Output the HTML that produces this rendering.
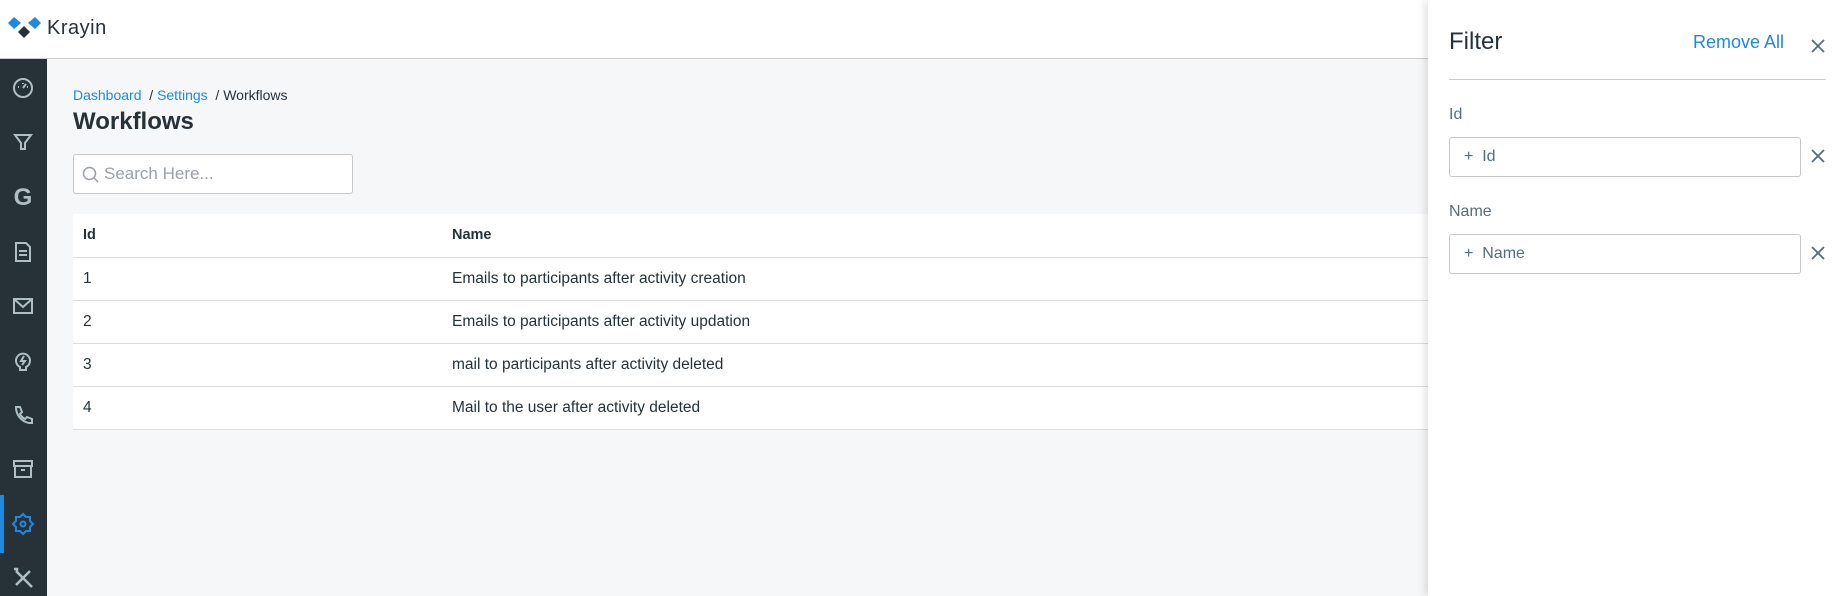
<!DOCTYPE html>
<html><head><meta charset="utf-8"><style>
*{box-sizing:border-box;margin:0;padding:0}
body{width:1842px;height:596px;overflow:hidden;font-family:"Liberation Sans",Arial,sans-serif;background:#f6f7f9;position:relative;color:#263238}
.hdr{position:absolute;left:0;top:0;width:1842px;height:59px;background:#fff;border-bottom:1px solid #ccc}
.side{position:absolute;left:0;top:59px;width:47px;height:537px;background:#263238}
.ic{position:absolute;left:11px;width:24px;height:24px}
.main{position:absolute;left:73px}
.bc{top:87px;font-size:14px;color:#263238}
.bc a{color:#1e88e5;text-decoration:none}
h1{position:absolute;left:73px;top:108px;font-size:24px;font-weight:bold;color:#263238}
.search{position:absolute;left:73px;top:154px;width:280px;height:40px;border:1px solid #c7c7c7;border-radius:3px;background:#fff;font-size:17px;color:#9aa0a6;padding:9px 0 0 30px}
table{position:absolute;left:73px;top:214px;width:1360px;border-collapse:collapse;background:#fff;font-size:15.5px;color:#263238}
td,th{height:43px;text-align:left;padding-left:10px;border-bottom:1px solid #ddd}
th{font-size:14.5px;font-weight:bold}
.panel{position:absolute;left:1428px;top:0;width:414px;height:596px;background:#fff;box-shadow:-3px 0 8px rgba(0,0,0,.12)}
.panel .t{position:absolute;left:21px;top:28px;font-size:24px;color:#263238}
.ra{position:absolute;left:265px;top:32px;font-size:18px;color:#1e88e5}
.x{position:absolute;width:16px;height:16px}
.lbl{position:absolute;left:21px;font-size:16px;color:#546e7a}
.inp{position:absolute;left:21px;width:352px;height:40px;border:1px solid #c7c7c7;border-radius:3px;font-size:16px;color:#546e7a;padding:10px 0 0 14px}
</style></head><body>
<div class="hdr">
<svg style="position:absolute;left:8px;top:17px" width="33" height="22" viewBox="0 0 33 22"><path d="M0 6 L6 0 L13 6 L6 12Z" fill="#1e88e5"/><path d="M20 6 L27 0 L33 6 L27 12Z" fill="#1e88e5"/><path d="M10 15 L16 9 L22 15 L16 21Z" fill="#263238"/></svg>
<div style="position:absolute;left:47px;top:17px;font-size:20px;color:#263238;letter-spacing:.5px">Krayin</div>
</div>
<div class="side">
<svg class="ic" style="top:17px" viewBox="0 0 24 24" fill="none" stroke="#b0bec5" stroke-width="2"><circle cx="12" cy="12" r="9"/><path d="M12 12l3-4M7 11h1M16 11h1M12 7v1"/></svg>
<svg class="ic" style="top:71px" viewBox="0 0 24 24" fill="none" stroke="#b0bec5" stroke-width="2"><path d="M4 5h16l-6 8v6h-4v-6z"/></svg>
<div class="ic" style="top:127px;color:#b0bec5;font-weight:bold;font-size:24px;text-align:center;line-height:24px">G</div>
<svg class="ic" style="top:181px" viewBox="0 0 24 24" fill="none" stroke="#b0bec5" stroke-width="2"><path d="M5 3h10l4 4v14H5z M8 11h8M8 15h8"/></svg>
<svg class="ic" style="top:235px" viewBox="0 0 24 24" fill="none" stroke="#b0bec5" stroke-width="2"><path d="M3 5h18v14H3z M3 5l9 8 9-8"/></svg>
<svg class="ic" style="top:290px" viewBox="0 0 24 24" fill="none" stroke="#b0bec5" stroke-width="2"><path d="M9 18a7 7 0 1 1 6 0v3H9z M13 7l-3 5h4l-3 4"/></svg>
<svg class="ic" style="top:344px" viewBox="0 0 24 24" fill="none" stroke="#b0bec5" stroke-width="2"><path d="M5 4h4l2 5-2 2a11 11 0 0 0 5 5l2-2 5 2v4h-3A16 16 0 0 1 5 4z"/></svg>
<svg class="ic" style="top:398px" viewBox="0 0 24 24" fill="none" stroke="#b0bec5" stroke-width="2"><path d="M3 4h18v5H3z M4 9v11h16V9 M10 13h4"/></svg>
<div style="position:absolute;left:0;top:436px;width:4px;height:58px;background:#1e88e5"></div>
<svg class="ic" style="top:453px" viewBox="0 0 24 24" fill="none" stroke="#1e88e5" stroke-width="2"><path d="M12 2l3 3h4v4l3 3-3 3v4h-4l-3 3-3-3H5v-4l-3-3 3-3V5h4z"/><circle cx="12" cy="12" r="2.5"/></svg>
<svg class="ic" style="top:507px" viewBox="0 0 24 24" fill="none" stroke="#b0bec5" stroke-width="2.5"><path d="M5 5l14 14M19 5L5 19M3 3l3 0 0 3M18 18l3 3"/></svg>
</div>
<div class="main bc" style="position:absolute"><a>Dashboard</a> &nbsp;/ <a>Settings</a> &nbsp;/ Workflows</div>
<h1>Workflows</h1>
<div class="search"><svg style="position:absolute;left:8px;top:11px" width="17" height="17" viewBox="0 0 17 17" fill="none" stroke="#9aa0a6" stroke-width="1.5"><circle cx="7.5" cy="7.5" r="6"/><path d="M12 12l4 4"/></svg>Search Here...</div>
<table>
<tr><th style="width:369px">Id</th><th>Name</th></tr>
<tr><td>1</td><td>Emails to participants after activity creation</td></tr>
<tr><td>2</td><td>Emails to participants after activity updation</td></tr>
<tr><td>3</td><td>mail to participants after activity deleted</td></tr>
<tr><td>4</td><td>Mail to the user after activity deleted</td></tr>
</table>
<div class="panel">
<div class="t">Filter</div>
<div class="ra">Remove All</div>
<svg class="x" style="left:382px;top:38px" viewBox="0 0 16 16" stroke="#546e7a" stroke-width="1.8"><path d="M2 2l12 12M14 2L2 14"/></svg>
<div style="position:absolute;left:21px;top:79px;width:377px;height:1px;background:#ccc"></div>
<div class="lbl" style="top:106px">Id</div>
<div class="inp" style="top:137px">+&nbsp; Id</div>
<svg class="x" style="left:382px;top:148px" viewBox="0 0 16 16" stroke="#546e7a" stroke-width="1.8"><path d="M2 2l12 12M14 2L2 14"/></svg>
<div class="lbl" style="top:203px">Name</div>
<div class="inp" style="top:234px">+&nbsp; Name</div>
<svg class="x" style="left:382px;top:245px" viewBox="0 0 16 16" stroke="#546e7a" stroke-width="1.8"><path d="M2 2l12 12M14 2L2 14"/></svg>
</div>
</body></html>
